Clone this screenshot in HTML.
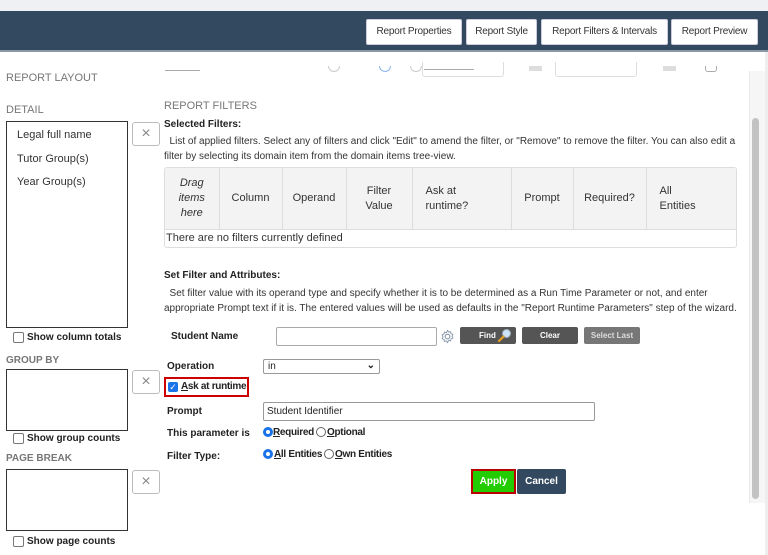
<!DOCTYPE html>
<html><head><meta charset="utf-8"><style>
*{box-sizing:border-box;margin:0;padding:0}
body{width:768px;height:555px;overflow:hidden;background:#fff;font-family:"Liberation Sans",Arial,sans-serif;font-size:11px;color:#222;position:relative}
.a{position:absolute}
.top{left:0;top:0;width:768px;height:11px;background:#eef0f4}
.hdr{left:0;top:11px;width:768px;height:41px;background:#33495f;border-bottom:2px solid #8a99a8}
.tab{top:19px;height:26px;background:#fff;border:1px solid #ccd;border-radius:2px;font-size:10px;line-height:24px;text-align:center;color:#333;font-weight:500;letter-spacing:-0.2px}
.lbl{color:#777;font-size:11px}
.box{border:1px solid #333;background:#fff}
.x{width:28px;height:24px;border:1px solid #bbb;border-radius:3px;color:#888;font-size:16px;text-align:center;line-height:21px;background:#fff}
.cb{width:11px;height:11px;border:1px solid #777;border-radius:2px;background:#fff}
.b{font-weight:bold}
table{border-collapse:collapse}
td{border-right:1px solid #ddd;text-align:center;font-size:11px;color:#333;line-height:15px;vertical-align:middle}
.btn{height:17px;border-radius:2px;color:#fff;font-size:8px;font-weight:bold;text-align:center;line-height:17px}
.rad{width:10px;height:10px;border-radius:50%;border:1px solid #666;background:#fff}
.radon{width:10px;height:10px;border-radius:50%;background:#fff;border:3px solid #1a73e8}
</style></head><body>
<div class="a top"></div>
<div class="a hdr"></div>
<div class="a tab" style="left:366px;width:96px">Report Properties</div>
<div class="a tab" style="left:466px;width:71px">Report Style</div>
<div class="a tab" style="left:541px;width:127px">Report Filters &amp; Intervals</div>
<div class="a tab" style="left:671px;width:87px">Report Preview</div>

<div class="a" style="left:165px;top:70px;width:35px;height:1px;background:#aaa"></div>
<div class="a" style="left:328px;top:66px;width:12px;height:6px;border:1px solid #ccc;border-top:none;border-radius:0 0 6px 6px"></div>
<div class="a" style="left:379px;top:66px;width:12px;height:6px;border:1px solid #8ab4ee;border-top:none;border-radius:0 0 6px 6px"></div>
<div class="a" style="left:410px;top:66px;width:12px;height:6px;border:1px solid #ccc;border-top:none;border-radius:0 0 6px 6px"></div>
<div class="a" style="left:422px;top:62px;width:82px;height:15px;border:1px solid #ddd;border-top:none;border-radius:0 0 3px 3px"></div>
<div class="a" style="left:424px;top:69px;width:50px;height:1px;background:#aaa"></div>
<div class="a" style="left:529px;top:66px;width:13px;height:5px;background:#ddd"></div>
<div class="a" style="left:555px;top:62px;width:82px;height:15px;border:1px solid #ddd;border-top:none;border-radius:0 0 3px 3px"></div>
<div class="a" style="left:663px;top:66px;width:13px;height:5px;background:#ddd"></div>
<div class="a" style="left:705px;top:66px;width:12px;height:6px;border:1px solid #aaa;border-top:none;border-radius:0 0 3px 3px"></div>

<div class="a" style="left:749px;top:71px;width:17px;height:432px;background:#f6f6f6;border-left:1px solid #e8e8e8"></div>
<div class="a" style="left:752px;top:118px;width:7px;height:381px;background:#c2c2c2;border-radius:4px"></div>
<div class="a" style="left:765px;top:52px;width:3px;height:503px;background:#eee"></div>

<div class="a lbl" style="left:6px;top:72px">REPORT LAYOUT</div>
<div class="a lbl" style="left:6px;top:104px">DETAIL</div>
<div class="a box" style="left:6px;top:121px;width:122px;height:207px"></div>
<div class="a" style="left:17px;top:124px;font-size:11px;color:#333;line-height:23.5px">Legal full name<br>Tutor Group(s)<br>Year Group(s)</div>
<div class="a x" style="left:132px;top:122px">×</div>
<div class="a cb" style="left:13px;top:332px"></div>
<div class="a b" style="left:27px;top:332px;font-size:10px">Show column totals</div>
<div class="a lbl b" style="left:6px;top:355px;font-size:10px">GROUP BY</div>
<div class="a box" style="left:6px;top:369px;width:122px;height:62px"></div>
<div class="a x" style="left:132px;top:370px">×</div>
<div class="a cb" style="left:13px;top:433px"></div>
<div class="a b" style="left:27px;top:433px;font-size:10px">Show group counts</div>
<div class="a lbl b" style="left:6px;top:453px;font-size:10px">PAGE BREAK</div>
<div class="a box" style="left:6px;top:469px;width:122px;height:62px"></div>
<div class="a x" style="left:132px;top:470px">×</div>
<div class="a cb" style="left:13px;top:536px"></div>
<div class="a b" style="left:27px;top:536px;font-size:10px">Show page counts</div>

<div class="a lbl" style="left:164px;top:100px">REPORT FILTERS</div>
<div class="a b" style="left:164px;top:119px;font-size:10px">Selected Filters:</div>
<div class="a" style="left:164px;top:134px;width:580px;font-size:10px;line-height:15px;color:#333">&nbsp;&nbsp;List of applied filters. Select any of filters and click "Edit" to amend the filter, or "Remove" to remove the filter. You can also edit a filter by selecting its domain item from the domain items tree-view.</div>
<div class="a" style="left:164px;top:167px;width:573px;height:81px;border:1px solid #ddd;border-radius:3px;overflow:hidden">
<table style="width:572px;height:62px;background:#f3f3f3;border-bottom:1px solid #ddd">
<tr><td style="width:54px;font-style:italic">Drag<br>items<br>here</td><td style="width:63px">Column</td><td style="width:64px">Operand</td><td style="width:66px">Filter<br>Value</td><td style="width:99px;text-align:left;padding-left:13px">Ask at<br>runtime?</td><td style="width:62px">Prompt</td><td style="width:73px">Required?</td><td style="border:none;text-align:left;padding-left:13px">All<br>Entities</td></tr>
</table>
<div style="padding:2px 0 0 1px;font-size:11px;color:#333">There are no filters currently defined</div>
</div>
<div class="a b" style="left:164px;top:270px;font-size:10px">Set Filter and Attributes:</div>
<div class="a" style="left:164px;top:286px;width:580px;font-size:10px;line-height:15px;color:#333">&nbsp;&nbsp;Set filter value with its operand type and specify whether it is to be determined as a Run Time Parameter or not, and enter appropriate Prompt text if it is. The entered values will be used as defaults in the "Report Runtime Parameters" step of the wizard.</div>

<div class="a b" style="left:171px;top:331px;font-size:10px">Student Name</div>
<div class="a" style="left:276px;top:327px;width:161px;height:19px;border:1px solid #aaa;border-radius:2px"></div>
<svg class="a" style="left:440px;top:329px" width="15" height="15" viewBox="0 0 16 16"><circle cx="8" cy="8" r="2.5" fill="none" stroke="#89a" stroke-width="1.2"/><path d="M8 1.5l1.2 1.8 2.1-.6.4 2.1 2 .9-.9 2 .9 2-2 .9-.4 2.1-2.1-.6L8 14.5l-1.2-1.8-2.1.6-.4-2.1-2-.9.9-2-.9-2 2-.9.4-2.1 2.1.6z" fill="none" stroke="#89a" stroke-width="1"/></svg>
<div class="a btn" style="left:460px;top:327px;width:56px;background:#555;text-align:left;padding-left:19px">Find</div>
<svg class="a" style="left:497px;top:328px" width="15" height="15" viewBox="0 0 15 15"><circle cx="9.5" cy="5.5" r="4" fill="#cfe3f7" stroke="#9ab" stroke-width="1"/><path d="M6.5 8.5L2 13" stroke="#e8a020" stroke-width="2.2" stroke-linecap="round"/></svg>
<div class="a btn" style="left:522px;top:327px;width:56px;background:#555">Clear</div>
<div class="a btn" style="left:584px;top:327px;width:56px;background:#777;color:#ddd">Select Last</div>

<div class="a b" style="left:167px;top:361px;font-size:10px">Operation</div>
<div class="a" style="left:263px;top:359px;width:117px;height:15px;border:1px solid #999;border-radius:2px;font-size:10px;padding-left:4px;line-height:13px">in<span style="position:absolute;right:4px;top:-1px;font-size:10px;font-weight:bold">⌄</span></div>
<div class="a" style="left:164px;top:377px;width:85px;height:20px;border:2px solid #c00"></div>
<div class="a" style="left:168px;top:382px;width:10px;height:10px;background:#1a73e8;border-radius:2px;color:#fff;font-size:9px;line-height:10px;text-align:center">✓</div>
<div class="a b" style="left:181px;top:381px;font-size:10px;letter-spacing:-0.3px"><u>A</u>sk at runtime</div>
<div class="a b" style="left:167px;top:406px;font-size:10px">Prompt</div>
<div class="a" style="left:263px;top:402px;width:332px;height:19px;border:1px solid #999;border-radius:2px;font-size:10px;padding-left:3px;line-height:17px">Student Identifier</div>
<div class="a b" style="left:167px;top:428px;font-size:10px">This parameter is</div>
<div class="a radon" style="left:263px;top:427px"></div>
<div class="a b" style="left:273px;top:427px;font-size:10px;letter-spacing:-0.3px"><u>R</u>equired</div>
<div class="a rad" style="left:316px;top:427px"></div>
<div class="a b" style="left:327px;top:427px;font-size:10px;letter-spacing:-0.3px"><u>O</u>ptional</div>
<div class="a b" style="left:167px;top:451px;font-size:10px">Filter Type:</div>
<div class="a radon" style="left:263px;top:449px"></div>
<div class="a b" style="left:274px;top:449px;font-size:10px;letter-spacing:-0.3px"><u>A</u>ll Entities</div>
<div class="a rad" style="left:324px;top:449px"></div>
<div class="a b" style="left:335px;top:449px;font-size:10px;letter-spacing:-0.3px"><u>O</u>wn Entities</div>
<div class="a" style="left:471px;top:469px;width:45px;height:25px;border:2px solid #b00;background:#22cc00;color:#fff;font-weight:bold;font-size:10px;text-align:center;line-height:21px">Apply</div>
<div class="a" style="left:517px;top:469px;width:49px;height:25px;background:#33495f;border-radius:2px;color:#fff;font-weight:bold;font-size:10px;text-align:center;line-height:25px">Cancel</div>
</body></html>
